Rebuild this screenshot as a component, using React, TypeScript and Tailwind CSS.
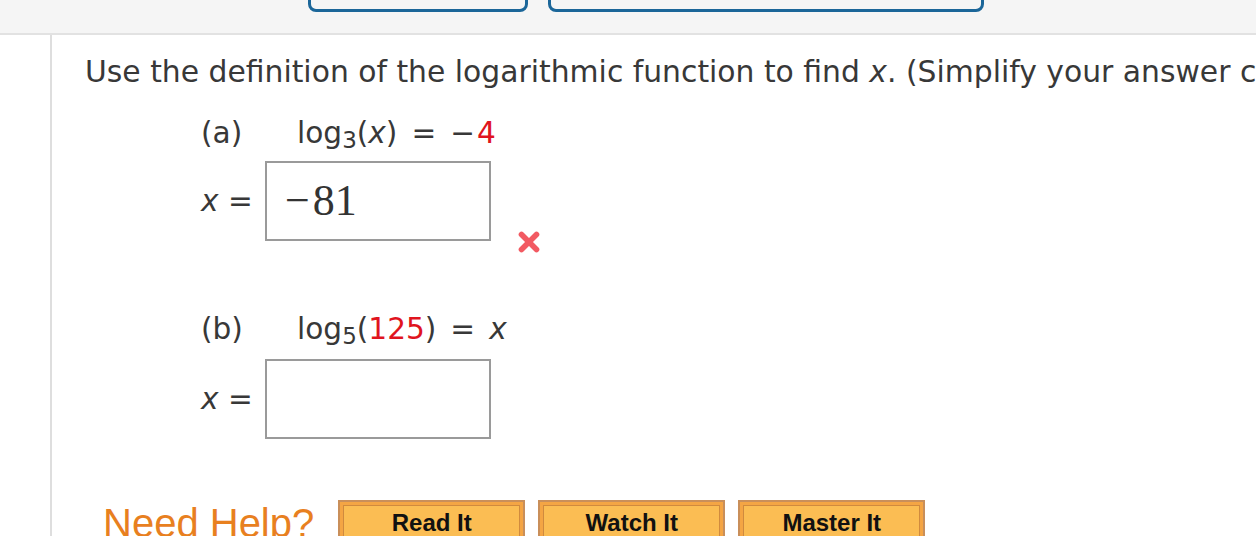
import { X } from 'lucide-react'

const verdana = { fontFamily: '"DejaVu Sans", Verdana, sans-serif' }

function AnswerBox({ value }: { value?: string }) {
  return (
    <div className="flex h-[80px] w-[226px] items-center border-2 border-[#9a9a9a] bg-white pl-[18px]">
      {value && (
        <span
          className="text-[44px] leading-none text-[#333]"
          style={{ fontFamily: '"Liberation Serif", "Times New Roman", serif' }}
        >
          <span className="mr-[3px]">−</span>81
        </span>
      )}
    </div>
  )
}

function HelpButton({ label }: { label: string }) {
  return (
    <div className="h-[44px] w-[187px] border-2 border-[#c98f5a] bg-[#f4a544] p-[3px]">
      <div className="flex h-full items-start justify-center border border-[#d08a3e] bg-[#fbbd53] pt-[5px]">
        <span
          className="text-[24px] font-bold leading-none text-[#111]"
          style={{ fontFamily: '"Liberation Sans", Arial, sans-serif' }}
        >
          {label}
        </span>
      </div>
    </div>
  )
}

export default function App() {
  return (
    <div className="h-[536px] w-[1256px] overflow-hidden bg-white text-[#383838]" style={verdana}>
      <div className="flex h-[35px] gap-[20px] overflow-hidden border-b-2 border-[#e2e2e2] bg-[#f5f5f5] pl-[308px]">
        <div className="-mt-[30px] h-[42px] w-[220px] rounded-[8px] border-[3px] border-[#1b6699]" />
        <div className="-mt-[30px] h-[42px] w-[436px] rounded-[8px] border-[3px] border-[#1b6699]" />
      </div>

      <div className="flex">
        <div className="h-[501px] w-[52px] shrink-0 border-r-2 border-[#dedede]" />
        <div className="flex-1 pl-[33px]">
          <p className="mt-[19px] whitespace-nowrap text-[29.8px] leading-[36px]">
            Use the definition of the logarithmic function to find <i>x</i>. (Simplify your answer completely.)
          </p>

          <div className="ml-[116px]">
            <div className="mt-[25px] flex h-[36px] items-center text-[29.6px] leading-[36px]">
              <span className="w-[96px]">(a)</span>
              <span className="whitespace-nowrap">
                log<sub className="relative top-[5px] align-baseline text-[23px]">3</sub>(<i>x</i>)
                <span className="mx-[14px]">=</span>−<span className="ml-[2px] text-[#e0141e]">4</span>
              </span>
            </div>
            <div className="mt-[10px] flex items-center">
              <span className="w-[64px] whitespace-nowrap text-[29.6px]">
                <i>x</i> =
              </span>
              <AnswerBox value="−81" />
              <div className="ml-[23px] h-[80px] w-[30px]">
                <X className="mt-[66px] h-[30px] w-[30px] text-[#f25a62]" strokeWidth={4.5} />
              </div>
            </div>

            <div className="mt-[70px] flex h-[36px] items-center text-[29.6px] leading-[36px]">
              <span className="w-[96px]">(b)</span>
              <span className="whitespace-nowrap">
                log<sub className="relative top-[5px] align-baseline text-[23px]">5</sub>(
                <span className="text-[#e0141e]">125</span>)<span className="mx-[14px]">=</span>
                <i>x</i>
              </span>
            </div>
            <div className="mt-[12px] flex items-center">
              <span className="w-[64px] whitespace-nowrap text-[29.6px]">
                <i>x</i> =
              </span>
              <AnswerBox />
            </div>
          </div>

          <div className="ml-[18px] mt-[61px] flex items-start gap-[13px]">
            <span
              className="mr-[11px] mt-[3px] whitespace-nowrap text-[40px] leading-none text-[#e8801f]"
              style={{ fontFamily: '"Liberation Sans", Arial, sans-serif' }}
            >
              Need Help?
            </span>
            <HelpButton label="Read It" />
            <HelpButton label="Watch It" />
            <HelpButton label="Master It" />
          </div>
        </div>
      </div>
    </div>
  )
}
